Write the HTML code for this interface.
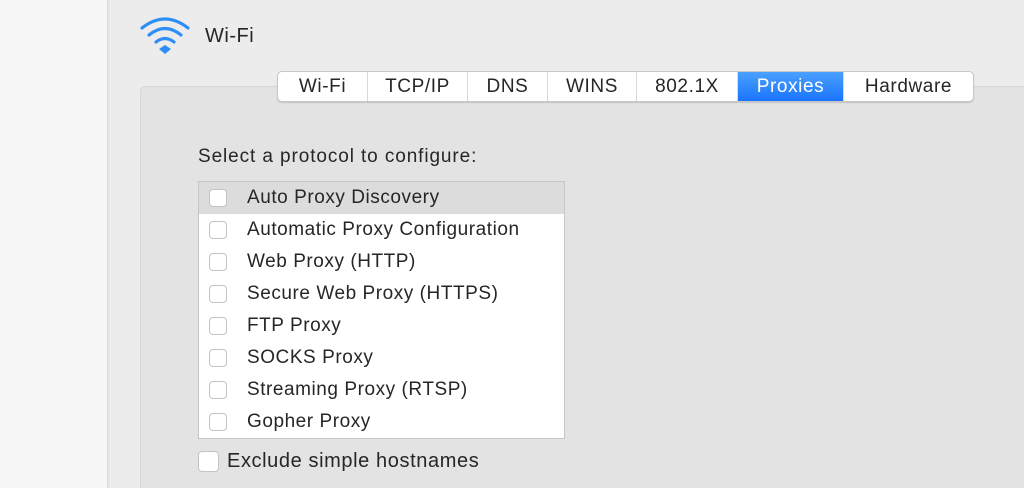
<!DOCTYPE html>
<html style="overflow:hidden"><head><style>
html,body{margin:0;width:1024px;height:488px;overflow:hidden}
body{background:#ececec;font-family:"Liberation Sans",sans-serif;color:#262626;position:relative}
.left{position:absolute;left:0;top:0;width:107px;height:488px;background:#f6f6f6;border-right:1px solid #dcdcdc;box-shadow:1px 0 2px rgba(0,0,0,.05)}
.panel{position:absolute;left:140px;top:86px;width:900px;height:410px;background:#e3e3e3;border:1px solid #d6d6d6;border-radius:5px}
.tabs{position:absolute;left:277px;top:71px;height:29px;display:flex;background:#fff;border:1px solid #c8c8c8;border-radius:5px;box-shadow:0 1px 1px rgba(0,0,0,.15);overflow:hidden}
.tabs div{font-size:19px;letter-spacing:0.6px;line-height:29px;text-align:center;border-right:1px solid #d8d8d8;box-sizing:border-box}
.tabs div:last-child{border-right:none}
.tabs .on{background:linear-gradient(#4aa0fe,#1a74fb);color:#fff}
.title{position:absolute;left:205px;top:25px;font-size:20px;letter-spacing:0.5px}
.lbl{position:absolute;left:198px;top:146px;font-size:19px;letter-spacing:0.9px}
.list{position:absolute;left:198px;top:181px;width:365px;height:256px;background:#fff;border:1px solid #c6c6c6}
.row{height:32px;position:relative;font-size:19px;letter-spacing:0.55px;line-height:32px}
.row.sel{background:#dcdcdc}
.cb{position:absolute;width:18px;height:18px;border:1px solid #c4c4c4;border-radius:4px;background:#fff;box-sizing:border-box}
.row .cb{left:10px;top:7px}
.row span{position:absolute;left:48px}
</style></head><body>
<div class="left"></div>
<svg style="position:absolute;left:139px;top:16px" width="52" height="40" viewBox="0 0 52 40">
<g fill="none" stroke="#2f8ef5" stroke-width="3.2" stroke-linecap="round">
<path d="M3 12 Q26 -6 49 12"/><path d="M10 19 Q26 6 42 19"/><path d="M17 26 Q26 19 35 26"/></g>
<path d="M20 33 L26 29 L32 33 L26 38 Z" fill="#2f8ef5"/></svg>
<div class="title">Wi-Fi</div>
<div class="panel"></div>
<div class="tabs">
<div style="width:90px">Wi-Fi</div><div style="width:100px">TCP/IP</div><div style="width:80px">DNS</div><div style="width:89px">WINS</div><div style="width:101px">802.1X</div><div class="on" style="width:106px">Proxies</div><div style="width:129px">Hardware</div>
</div>
<div class="lbl">Select a protocol to configure:</div>
<div class="list">
<div class="row sel"><div class="cb"></div><span>Auto Proxy Discovery</span></div>
<div class="row"><div class="cb"></div><span>Automatic Proxy Configuration</span></div>
<div class="row"><div class="cb"></div><span>Web Proxy (HTTP)</span></div>
<div class="row"><div class="cb"></div><span>Secure Web Proxy (HTTPS)</span></div>
<div class="row"><div class="cb"></div><span>FTP Proxy</span></div>
<div class="row"><div class="cb"></div><span>SOCKS Proxy</span></div>
<div class="row"><div class="cb"></div><span>Streaming Proxy (RTSP)</span></div>
<div class="row"><div class="cb"></div><span>Gopher Proxy</span></div>
</div>
<div class="cb" style="left:198px;top:451px;width:21px;height:21px"></div>
<div style="position:absolute;left:227px;top:450px;font-size:20px;letter-spacing:0.6px">Exclude simple hostnames</div>
</body></html>
